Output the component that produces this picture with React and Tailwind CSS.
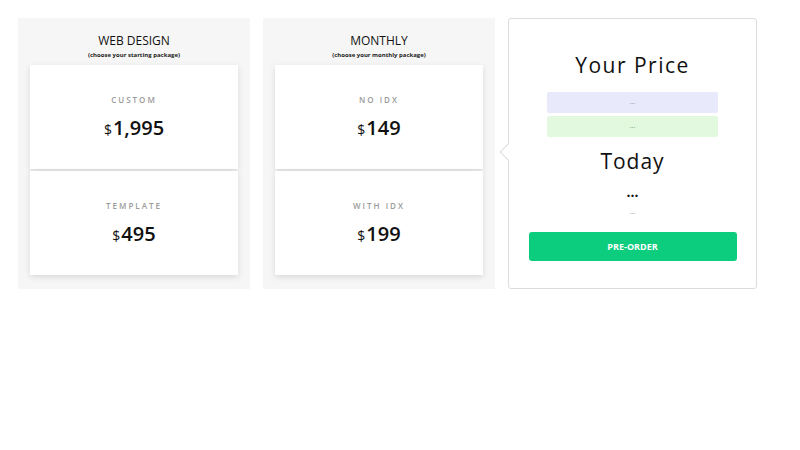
import React from 'react'

const font = { fontFamily: '"Open Sans", "Noto Sans", sans-serif' }

const PriceCard = ({ label, price }) => (
    <div className="bg-white h-[104px] flex flex-col items-center justify-center shadow-[0_2px_6px_rgba(0,0,0,0.12)]">
        <div className="text-[8px] tracking-[2px] text-[#9a9a9a] font-semibold leading-none">{label}</div>
        <div className="mt-[14px] text-[#111] font-semibold leading-none flex items-end">
            <span className="text-[14px] mb-[1px] mr-[1px] font-normal">$</span>
            <span className="text-[20px]">{price}</span>
        </div>
    </div>
)

const Column = ({ title, sub, items }) => (
    <div className="w-[232px] h-[271px] bg-[#f6f6f6] flex flex-col px-[12px]">
        <div className="text-center text-[12px] text-[#111] mt-[17px] leading-none">{title}</div>
        <div className="text-center text-[6px] font-bold text-[#222] mt-[5px] leading-none">{sub}</div>
        <div className="mt-[7px] flex flex-col gap-[2px]">
            {items.map((it) => (
                <PriceCard key={it.label} label={it.label} price={it.price} />
            ))}
        </div>
    </div>
)

export default function App() {
    return (
        <div className="w-[800px] h-[450px] bg-white" style={font}>
            <div className="flex pt-[18px] pl-[18px] gap-[13px]">
                <Column
                    title="WEB DESIGN"
                    sub="(choose your starting package)"
                    items={[
                        { label: 'CUSTOM', price: '1,995' },
                        { label: 'TEMPLATE', price: '495' },
                    ]}
                />
                <Column
                    title="MONTHLY"
                    sub="(choose your monthly package)"
                    items={[
                        { label: 'NO IDX', price: '149' },
                        { label: 'WITH IDX', price: '199' },
                    ]}
                />
                <div className="relative w-[249px] h-[271px] bg-white border border-[#dcdcdc] rounded-[3px] flex flex-col items-center">
                    <div className="absolute left-[-7px] top-[127px] w-[12px] h-[12px] bg-white border-l border-b border-[#dcdcdc] rotate-45" />
                    <div className="mt-[36px] text-[21px] tracking-[1.5px] text-[#111] leading-none">Your Price</div>
                    <div className="mt-[16px] w-[171px] h-[21px] rounded-[2px] bg-[#e8eafc] flex items-center justify-center text-[7px] text-[#888]">...</div>
                    <div className="mt-[3px] w-[171px] h-[21px] rounded-[2px] bg-[#e2f9df] flex items-center justify-center text-[7px] text-[#5a9a5a]">...</div>
                    <div className="mt-[14px] text-[21px] tracking-[1px] text-[#111] leading-none">Today</div>
                    <div className="mt-[13px] text-[14px] font-bold text-[#111] leading-none">...</div>
                    <div className="mt-[9px] text-[7px] text-[#888] leading-none">...</div>
                    <button className="mt-[17px] w-[208px] h-[29px] rounded-[3px] bg-[#0ccc7e] text-white text-[9px] font-bold">
                        PRE-ORDER
                    </button>
                </div>
            </div>
        </div>
    )
}
